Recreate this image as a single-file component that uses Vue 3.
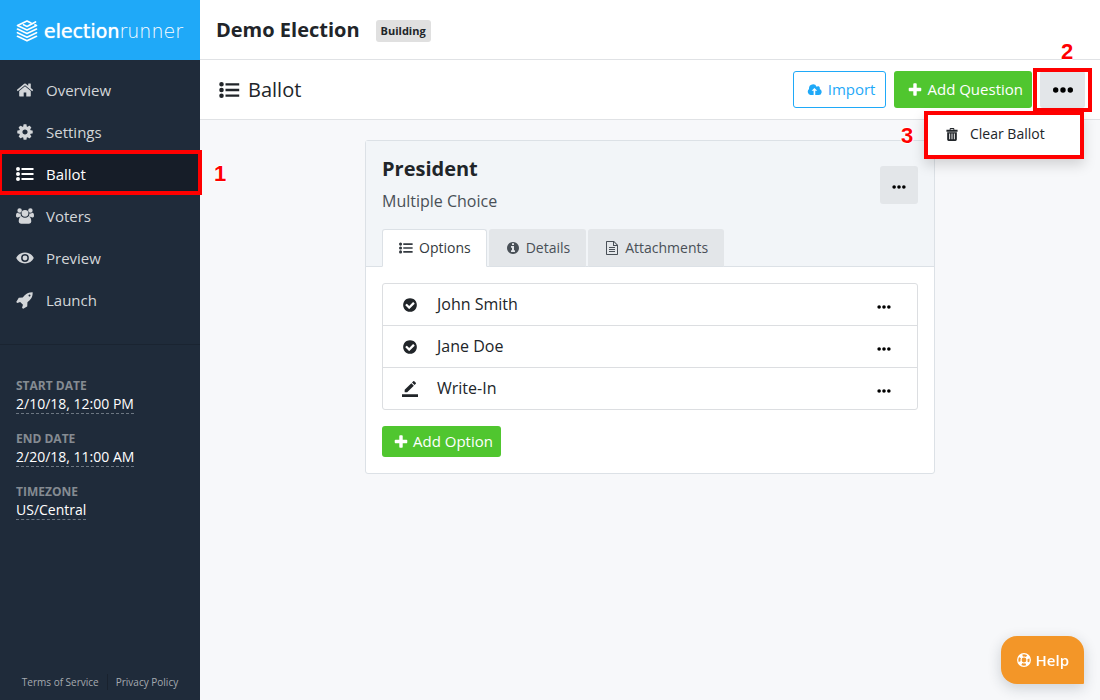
<script setup>
import { h } from 'vue'

const fa = '0 0 1792 1792'
const icons = {
  home: { box: fa, d: 'M1472 992v480q0 26-19 45t-45 19h-384v-384h-256v384h-384q-26 0-45-19t-19-45v-480q0-1 .5-3t.5-3l575-474 575 474q1 2 1 6zm223-69l-62 74q-8 9-21 11h-3q-13 0-21-7l-692-577-692 577q-12 8-24 7-13-2-21-11l-62-74q-8-10-7-23.5t11-21.5l719-599q32-26 76-26t76 26l244 204v-195q0-14 9-23t23-9h192q14 0 23 9t9 23v408l219 182q10 8 11 21.5t-7 23.5z' },
  cog: { box: fa, d: 'M1152 896q0-106-75-181t-181-75-181 75-75 181 75 181 181 75 181-75 75-181zm512-109v222q0 12-8 23t-20 13l-185 28q-19 54-39 91 35 50 107 138 10 12 10 25t-9 23q-27 37-99 108t-94 71q-12 0-26-9l-138-108q-44 23-91 38-16 136-29 186-7 28-36 28h-222q-14 0-24.5-8.5t-11.5-21.5l-28-184q-49-16-90-37l-141 107q-10 9-25 9-14 0-25-11-126-114-165-168-7-10-7-23 0-12 8-23 15-21 51-66.5t54-70.5q-27-50-41-99l-183-27q-13-2-21-12.5t-8-23.5v-222q0-12 8-23t19-13l186-28q14-46 39-92-40-57-107-138-10-12-10-24 0-10 9-23 26-36 98.5-107.5t94.5-71.5q13 0 26 10l138 107q44-23 91-38 16-136 29-186 7-28 36-28h222q14 0 24.5 8.5t11.5 21.5l28 184q49 16 90 37l142-107q9-9 24-9 13 0 25 10 129 119 165 170 7 8 7 22 0 12-8 23-15 21-51 66.5t-54 70.5q26 50 41 98l183 28q13 2 21 12.5t8 23.5z' },
  list: { box: '0 0 18 14', d: 'M2 0a2 2 0 1 1 0 4a2 2 0 0 1 0-4zM2 5a2 2 0 1 1 0 4a2 2 0 0 1 0-4zM2 10a2 2 0 1 1 0 4a2 2 0 0 1 0-4zM5.5 1h12v2h-12zM5.5 6h12v2h-12zM5.5 11h12v2h-12z' },
  users: { box: '0 0 20 18', d: 'M4 0.5a2.5 2.5 0 1 1 0 5a2.5 2.5 0 0 1 0-5zM16 0.5a2.5 2.5 0 1 1 0 5a2.5 2.5 0 0 1 0-5zM10 2.2a3.8 3.8 0 1 1 0 7.6a3.8 3.8 0 0 1 0-7.6zM1.8 5.5q1 .8 2.2 .8q.6 0 1.200-.2q-.2 2.100 1 3.700h-1.700q-1.500 .1-2.300 1h-.8q-1.400-.2-1.400-1.800q0-3.500 1.800-3.500zM18.200 5.500q1.800 0 1.800 3.500q0 1.600-1.400 1.800h-.8q-.8-.9-2.300-1h-1.700q1.200-1.600 1-3.700q.6 .2 1.200 .2q1.200 0 2.200-.8zM6.300 9.500q1.600 1.400 3.700 1.400t3.700-1.400q3.300 .2 3.300 5.700q0 2.300-2.500 2.300h-9q-2.500 0-2.500-2.300q0-5.500 3.300-5.700z' },
  eye: { box: '0 0 18 12', rule: 'evenodd', d: 'M9 .5C5 .5 1.800 2.600 .2 6c1.600 3.400 4.800 5.500 8.800 5.500s7.200-2.100 8.800-5.500C16.200 2.600 13 .5 9 .5zM9 2.100a3.900 3.900 0 1 1 0 7.800a3.900 3.900 0 0 1 0-7.800zM9 3.600a2.400 2.400 0 1 0 0 4.800a2.400 2.400 0 0 0 0-4.800z' },
  rocket: { box: fa, d: 'M1440 448q0-40-28-68t-68-28-68 28-28 68 28 68 68 28 68-28 28-68zm224-288q0 249-75.500 430.500t-253.500 360.500q-81 80-195 176l-20 379q-2 16-16 26l-384 224q-7 4-16 4-12 0-23-9l-64-64q-13-14-8-32l85-276-281-281-276 85q-3 1-9 1-14 0-23-9l-64-64q-17-19-5-39l224-384q10-14 26-16l379-20q96-114 176-195 188-187 358-258t431-71q14 0 24 9.500t10 22.500z' },
  plus: { box: fa, d: 'M1600 736v192q0 40-28 68t-68 28h-416v416q0 40-28 68t-68 28h-192q-40 0-68-28t-28-68v-416h-416q-40 0-68-28t-28-68v-192q0-40 28-68t68-28h416v-416q0-40 28-68t68-28h192q40 0 68 28t28 68v416h416q40 0 68 28t28 68z' },
  check: { box: fa, d: 'M1412 734q0-28-18-46l-91-90q-19-19-45-19t-45 19l-408 407-226-226q-19-19-45-19t-45 19l-91 90q-18 18-18 46 0 27 18 45l362 362q19 19 45 19 27 0 46-19l543-543q18-18 18-45zm252 162q0 209-103 385.500t-279.500 279.500-385.500 103-385.500-103-279.500-279.500-103-385.500 103-385.500 279.500-279.500 385.500-103 385.500 103 279.500 279.500 103 385.500z' },
  info: { box: fa, d: 'M1152 1376v-160q0-14-9-23t-23-9h-96v-512q0-14-9-23t-23-9h-320q-14 0-23 9t-9 23v160q0 14 9 23t23 9h96v320h-96q-14 0-23 9t-9 23v160q0 14 9 23t23 9h448q14 0 23-9t9-23zm-128-896v-160q0-14-9-23t-23-9h-192q-14 0-23 9t-9 23v160q0 14 9 23t23 9h192q14 0 23-9t9-23zm640 416q0 209-103 385.500t-279.500 279.500-385.500 103-385.500-103-279.500-279.500-103-385.500 103-385.500 279.500-279.500 385.500-103 385.500 103 279.500 279.500 103 385.500z' },
  file: { box: '0 0 12 14', rule: 'evenodd', d: 'M0 .8Q0 0 .8 0H8l4 4v9.200q0 .8-.8 .8H.8Q0 14 0 13.200zM1 1v12h10V5H7V1zM8 1.300V4h2.700zM3 6h6v1H3zM3 8h6v1H3zM3 10h6v1H3z' },
  pencil: { box: '0 0 24 24', d: 'M17.750 7L14 3.250l-10 10V17h3.750l10-10zm2.960-2.960c.39-.39.39-1.020 0-1.410L18.370.29c-.39-.39-1.020-.39-1.410 0L15 2.250 18.750 6l1.960-1.960zM0 20h24v4H0z' },
  cloud: { box: '0 3 24 18', rule: 'evenodd', d: 'M20.200 10.500Q20.600 9.800 20.600 9A3.200 3.200 0 0 0 15.400 6.600A6.400 6.400 0 0 0 3.200 9.500V10.300A5.600 5.600 0 0 0 5.600 20H18.800A4.900 4.900 0 0 0 20.200 10.500zM11.900 8.800L16.400 13.300H13.200V20H10.600V13.300H7.400z' },
  trash: { box: '0 0 12 14', rule: 'evenodd', d: 'M3.500 2V1Q3.500 0 4.500 0h3Q8.500 0 8.500 1V2H12V4H0V2zM4.500 1V2h3V1zM.8 4.500H11.200V12.500Q11.200 14 9.700 14H2.300Q.8 14 .8 12.500zM3 6v6h1V6zM5.500 6v6h1V6zM8 6v6h1V6z' },
  dots: { box: '0 0 20 6', d: 'M2.700 .3a2.700 2.700 0 1 1 0 5.400a2.700 2.700 0 0 1 0-5.400zM10 .3a2.700 2.700 0 1 1 0 5.400a2.700 2.700 0 0 1 0-5.400zM17.300 .3a2.700 2.700 0 1 1 0 5.400a2.700 2.700 0 0 1 0-5.400z' }
}

const Icon = (props) => {
  const icon = icons[props.name]
  return h('svg', { viewBox: icon.box, fill: 'currentColor', 'aria-hidden': 'true' }, [
    h('path', { d: icon.d, 'fill-rule': icon.rule || 'nonzero' })
  ])
}
Icon.props = ['name']

const nav = [
  { label: 'Overview', icon: 'home' },
  { label: 'Settings', icon: 'cog' },
  { label: 'Ballot', icon: 'list', active: true },
  { label: 'Voters', icon: 'users' },
  { label: 'Preview', icon: 'eye' },
  { label: 'Launch', icon: 'rocket' }
]
const facts = [
  { label: 'Start Date', value: '2/10/18, 12:00 PM' },
  { label: 'End Date', value: '2/20/18, 11:00 AM' },
  { label: 'Timezone', value: 'US/Central' }
]
const tabs = [
  { label: 'Options', icon: 'list', active: true },
  { label: 'Details', icon: 'info' },
  { label: 'Attachments', icon: 'file' }
]
const options = [
  { label: 'John Smith', icon: 'check' },
  { label: 'Jane Doe', icon: 'check' },
  { label: 'Write-In', icon: 'pencil' }
]
</script>

<template>
  <div class="app">
    <aside class="sidebar">
      <a class="brand" href="#" aria-label="electionrunner">
        <svg class="brand-mark" viewBox="0 0 22 22" fill="none" stroke="currentColor" stroke-width="1.700" stroke-linejoin="round" stroke-linecap="round" aria-hidden="true">
          <path d="M15 3L11 1L1.500 5.500L11 10L20.500 5.500L19 4.800" />
          <path d="M7.500 4.700L11 6.500L19.500 2" />
          <path d="M1.500 9.100L11 13.600L20.500 9.100" />
          <path d="M1.500 12.700L11 17.200L20.500 12.700" />
          <path d="M1.500 16.300L11 20.800L20.500 16.300" />
        </svg>
        <span class="brand-name"><span class="brand-bold">election</span><span class="brand-thin">runner</span></span>
      </a>
      <nav class="nav">
        <a v-for="item in nav" :key="item.label" href="#" class="nav-item" :class="{ active: item.active }">
          <Icon :name="item.icon" class="nav-icon" :class="item.icon" />
          <span>{{ item.label }}</span>
          <span v-if="item.active" class="step step-one">1</span>
        </a>
      </nav>
      <dl class="facts">
        <div v-for="fact in facts" :key="fact.label" class="fact">
          <dt>{{ fact.label }}</dt>
          <dd><a href="#">{{ fact.value }}</a></dd>
        </div>
      </dl>
      <footer class="legal">
        <a href="#">Terms of Service</a>
        <a href="#">Privacy Policy</a>
      </footer>
    </aside>

    <div class="page">
      <header class="topbar">
        <h1>Demo Election</h1>
        <span class="status">Building</span>
      </header>

      <div class="toolbar">
        <h2><Icon name="list" class="title-icon" />Ballot</h2>
        <div class="actions">
          <button type="button" class="btn import"><Icon name="cloud" class="cloud-icon" />Import</button>
          <button type="button" class="btn green"><Icon name="plus" class="plus-icon" />Add Question</button>
          <div class="more">
            <button type="button" class="btn grey" aria-label="More actions"><Icon name="dots" class="dots-large" /></button>
            <span class="step step-two">2</span>
            <div class="menu">
              <button type="button" class="menu-item"><Icon name="trash" class="trash-icon" />Clear Ballot</button>
              <span class="step step-three">3</span>
            </div>
          </div>
        </div>
      </div>

      <main class="content">
        <section class="card">
          <div class="card-head">
            <div class="card-title">
              <div>
                <h3>President</h3>
                <p>Multiple Choice</p>
              </div>
              <button type="button" class="square" aria-label="Question actions"><Icon name="dots" class="dots" /></button>
            </div>
            <div class="tabs" role="tablist">
              <button v-for="tab in tabs" :key="tab.label" type="button" role="tab" class="tab" :class="{ active: tab.active }" :aria-selected="!!tab.active">
                <Icon :name="tab.icon" class="tab-icon" :class="tab.icon" />{{ tab.label }}
              </button>
            </div>
          </div>
          <div class="card-body">
            <ul class="options">
              <li v-for="option in options" :key="option.label">
                <Icon :name="option.icon" class="option-icon" />
                <span class="option-name">{{ option.label }}</span>
                <button type="button" class="bare" :aria-label="option.label + ' actions'"><Icon name="dots" class="dots" /></button>
              </li>
            </ul>
            <button type="button" class="btn green small"><Icon name="plus" class="plus-icon" />Add Option</button>
          </div>
        </section>
      </main>
    </div>

    <button type="button" class="help">
      <svg class="help-icon" viewBox="0 0 14 14" fill="none" stroke="currentColor" aria-hidden="true">
        <circle cx="7" cy="7" r="6.300" stroke-width="1.300" />
        <circle cx="7" cy="7" r="3" stroke-width="1.200" />
        <circle cx="7" cy="7" r="4.700" stroke-width="3.200" stroke-dasharray="3.200 4.183" stroke-dashoffset="-2.090" />
      </svg>
      Help
    </button>
  </div>
</template>

<style>
body {
  margin: 0;
  background: #f7f8fa;
}
</style>

<style scoped>
.app {
  display: flex;
  min-height: 100vh;
  font-family: "Open Sans", "Noto Sans", sans-serif;
  font-size: 16px;
  color: #212529;
}
.app *,
.app *::after {
  box-sizing: border-box;
}
button {
  font: inherit;
  color: inherit;
  border: 0;
  padding: 0;
  background: none;
  cursor: pointer;
}
a {
  color: inherit;
  text-decoration: none;
}
svg {
  display: block;
  flex: none;
}
h1, h2, h3, p, dl, dd, ul {
  margin: 0;
  padding: 0;
}

.sidebar {
  flex: none;
  display: flex;
  flex-direction: column;
  width: 200px;
  background: #1f2b3a;
}
.brand {
  display: flex;
  align-items: center;
  gap: 6px;
  height: 60px;
  padding: 2px 0 0 16px;
  background: #1fa9f8;
  color: #fff;
}
.brand-mark {
  width: 22px;
  height: 22px;
}
.brand-name {
  font-family: "DejaVu Sans", sans-serif;
  font-size: 19px;
  line-height: 24px;
}
.brand-bold {
  text-shadow: 0 0 1px #fff;
}
.brand-thin {
  font-weight: 200;
}
.nav {
  padding: 9px 0 23px;
  border-bottom: 1px solid #1a2431;
}
.nav-item {
  position: relative;
  display: flex;
  align-items: center;
  gap: 12px;
  height: 42px;
  padding-left: 16px;
  font-size: 15px;
  color: #d3d6d9;
}
.nav-icon {
  width: 18px;
  height: 18px;
}
.nav-icon.list {
  height: 14px;
}
.nav-icon.eye {
  height: 12px;
}
.nav-item.active {
  background: #161d28;
  color: #fff;
}
.nav-item.active::after {
  content: "";
  position: absolute;
  inset: -3px -2px 0;
  border: 4px solid #f00;
}
.facts {
  padding: 32px 16px;
}
.fact {
  height: 53px;
}
.fact dt {
  font-size: 12px;
  font-weight: 700;
  line-height: 17px;
  text-transform: uppercase;
  color: #858b92;
}
.fact dd {
  font-size: 14px;
  line-height: 19px;
  color: #fff;
}
.fact a {
  display: inline-block;
  border-bottom: 1px dashed #6c7681;
}
.legal {
  display: flex;
  justify-content: center;
  margin-top: auto;
  padding-bottom: 10px;
  font-size: 10px;
  line-height: 16px;
  color: #a5aab0;
}
.legal a {
  padding: 0 8px;
}
.legal a + a {
  border-left: 1px solid #19222e;
}

.page {
  flex: 1;
  min-width: 0;
}
.topbar,
.toolbar {
  display: flex;
  align-items: center;
  height: 60px;
  padding: 0 15px 0 16px;
  background: #fff;
  border-bottom: 1px solid #e0e2e5;
}
h1 {
  font-size: 20px;
  font-weight: 700;
  line-height: 28px;
}
.status {
  margin: 2px 0 0 16px;
  padding: 0 5px;
  border-radius: 3px;
  background: #e0e0e0;
  font-size: 11px;
  font-weight: 700;
  line-height: 22px;
}
h2 {
  display: flex;
  align-items: center;
  gap: 8px;
  padding-left: 3px;
  font-size: 20px;
  font-weight: 400;
}
.title-icon {
  width: 21px;
  height: 16px;
}
.actions {
  display: flex;
  gap: 8px;
  margin-left: auto;
}
.btn {
  display: flex;
  align-items: center;
  justify-content: center;
  height: 37px;
  border-radius: 3px;
  font-size: 15px;
}
.import {
  gap: 6px;
  padding: 0 10px 2px 13px;
  border: 1px solid #1fa9f8;
  background: #fff;
  color: #1fa9f8;
}
.green {
  gap: 4px;
  padding: 0 9px 2px 13px;
  background: #50c62f;
  color: #fff;
}
.small {
  height: 31px;
  padding: 0 8px 2px 11px;
}
.grey {
  width: 45px;
  background: #e3e6e9;
}
.cloud-icon {
  width: 15px;
  height: 12px;
  margin-top: 2px;
}
.plus-icon {
  width: 16px;
  height: 16px;
  margin-top: 2px;
}
.dots-large {
  width: 20px;
  height: 6px;
  color: #000;
}
.dots {
  width: 14px;
  height: 4px;
  color: #000;
}
.more {
  position: relative;
}
.more::after {
  content: "";
  position: absolute;
  inset: -3px -7px -4px;
  border: 4px solid #f00;
  pointer-events: none;
}
.menu {
  position: absolute;
  z-index: 2;
  top: 40px;
  right: 1px;
  width: 160px;
  border: 4px solid #f00;
  background: #fff;
  box-shadow: 0 6px 12px rgba(0, 0, 0, 0.15);
}
.menu-item {
  display: flex;
  align-items: center;
  gap: 12px;
  width: 100%;
  height: 40px;
  padding: 0 18px 4px;
  font-size: 14px;
}
.trash-icon {
  width: 12px;
  height: 13px;
  margin-top: 2px;
}
.step {
  position: absolute;
  font-family: "Liberation Sans", Arial, sans-serif;
  font-size: 22px;
  font-weight: 700;
  line-height: 24px;
  color: #f00;
  text-shadow: 1px 0 #fff, -1px 0 #fff, 0 1px #fff, 0 -1px #fff;
}
.step-one {
  left: 214px;
  top: 9px;
}
.step-two {
  left: 21px;
  top: -31px;
}
.step-three {
  left: -27px;
  top: 9px;
}

.content {
  padding: 20px 16px;
}
.card {
  max-width: 570px;
  margin: 0 auto;
  border: 1px solid #dce1e6;
  border-radius: 3px;
  background: #fff;
}
.card-head {
  padding: 13px 16px 0;
  background: #f2f5f8;
  border-bottom: 1px solid #dce1e6;
}
.card-title {
  display: flex;
  justify-content: space-between;
  align-items: flex-start;
  height: 75px;
}
h3 {
  font-size: 20px;
  font-weight: 700;
  line-height: 30px;
}
.card-title p {
  padding-top: 5px;
  font-size: 16px;
  line-height: 24px;
  color: #495057;
}
.square {
  display: flex;
  align-items: center;
  justify-content: center;
  width: 38px;
  height: 38px;
  margin-top: 12px;
  padding-top: 3px;
  border-radius: 3px;
  background: #e3e6e9;
}
.tabs {
  display: flex;
  gap: 2px;
  margin-bottom: -1px;
}
.tab {
  display: flex;
  align-items: center;
  gap: 6px;
  height: 38px;
  padding: 0 15px 2px 16px;
  border: 1px solid #e3e6e9;
  border-bottom-color: #dce1e6;
  border-radius: 3px 3px 0 0;
  background: #e3e6e9;
  font-size: 14px;
  color: #495057;
}
.tab.active {
  background: #fff;
  border-color: #dce1e6;
  border-bottom-color: #fff;
  color: #343a40;
}
.tab-icon {
  width: 14px;
  height: 14px;
  margin-top: 2px;
}
.tab-icon.list {
  height: 12px;
}
.card-body {
  padding: 16px;
}
.options {
  list-style: none;
  margin-bottom: 16px;
  border: 1px solid #dcdee1;
  border-radius: 3px;
}
.options li {
  display: flex;
  align-items: center;
  height: 42px;
  padding: 0 26px 0 19px;
}
.options li:first-child {
  height: 41px;
}
.options li + li {
  border-top: 1px solid #dcdee1;
}
.option-icon {
  width: 16px;
  height: 16px;
}
.option-name {
  flex: 1;
  padding: 0 0 2px 19px;
}
.bare {
  display: flex;
  align-items: center;
  height: 24px;
  padding-top: 4px;
}

.help {
  position: fixed;
  right: 16px;
  bottom: 16px;
  display: flex;
  align-items: center;
  gap: 5px;
  height: 48px;
  padding: 0 15px 0 16px;
  border-radius: 16px 16px 1px 16px;
  background: #f39628;
  box-shadow: 0 4px 14px rgba(31, 43, 58, 0.2);
  font-size: 15px;
  font-weight: 600;
  color: #fff;
}
.help-icon {
  width: 14px;
  height: 14px;
}
</style>
